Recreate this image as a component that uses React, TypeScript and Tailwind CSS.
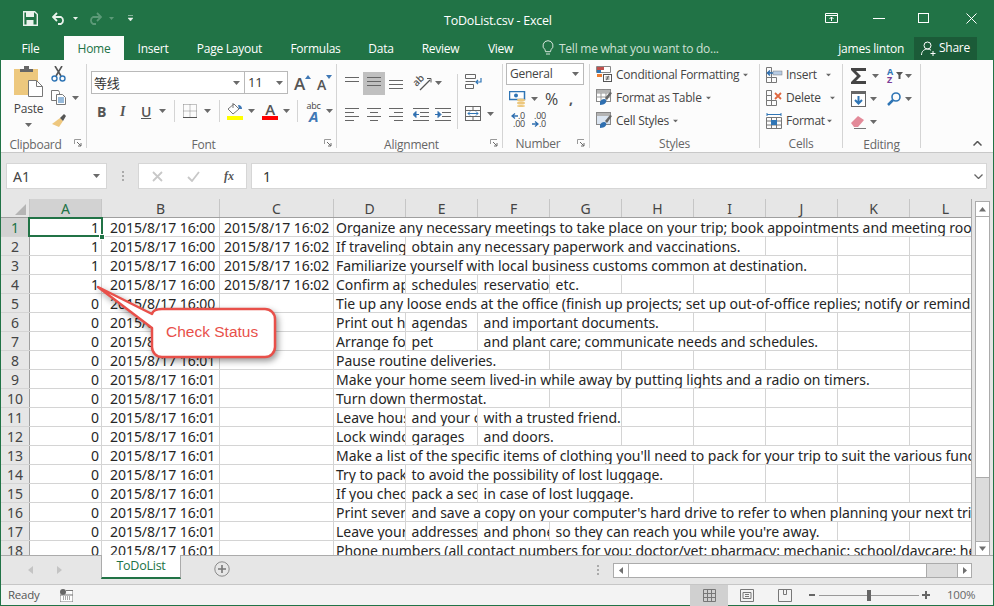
import type { ReactNode } from "react";

const colWidths = [72, 118, 114, 72, 72, 72, 72, 72, 72, 72, 72, 72];
const colNames = ["A", "B", "C", "D", "E", "F", "G", "H", "I", "J", "K", "L"];

type Cell = { t?: string; span?: number };
const B0 = "2015/8/17 16:00";
const B1 = "2015/8/17 16:01";
const C0 = "2015/8/17 16:02";

// D onwards: text plus how many columns it spills across
const rows: { a: string; b: string; c?: string; cells: Cell[] }[] = [
  { a: "1", b: B0, c: C0, cells: [{ t: "Organize any necessary meetings to take place on your trip; book appointments and meeting roo", span: 9 }] },
  { a: "1", b: B0, c: C0, cells: [{ t: "If traveling" }, { t: " obtain any necessary paperwork and vaccinations.", span: 5 }, {}, {}, {}] },
  { a: "1", b: B0, c: C0, cells: [{ t: "Familiarize yourself with local business customs common at destination.", span: 7 }, {}, {}] },
  { a: "1", b: B0, c: C0, cells: [{ t: "Confirm ap" }, { t: " schedules" }, { t: " reservatio" }, { t: " etc." }, {}, {}, {}, {}, {}] },
  { a: "0", b: B0, cells: [{ t: "Tie up any loose ends at the office (finish up projects; set up out-of-office replies; notify or remind", span: 9 }] },
  { a: "0", b: B0, cells: [{ t: "Print out ha" }, { t: " agendas" }, { t: " and important documents.", span: 3 }, {}, {}, {}, {}] },
  { a: "0", b: B0, cells: [{ t: "Arrange fo" }, { t: " pet" }, { t: " and plant care; communicate needs and schedules.", span: 5 }, {}, {}] },
  { a: "0", b: B1, cells: [{ t: "Pause routine deliveries.", span: 3 }, {}, {}, {}, {}, {}, {}] },
  { a: "0", b: B1, cells: [{ t: "Make your home seem lived-in while away by putting lights and a radio on timers.", span: 8 }, {}] },
  { a: "0", b: B1, cells: [{ t: "Turn down thermostat.", span: 3 }, {}, {}, {}, {}, {}, {}] },
  { a: "0", b: B1, cells: [{ t: "Leave hous" }, { t: " and your c" }, { t: " with a trusted friend.", span: 2 }, {}, {}, {}, {}, {}] },
  { a: "0", b: B1, cells: [{ t: "Lock windo" }, { t: " garages" }, { t: " and doors.", span: 2 }, {}, {}, {}, {}, {}] },
  { a: "0", b: B1, cells: [{ t: "Make a list of the specific items of clothing you'll need to pack for your trip to suit the various funct", span: 9 }] },
  { a: "0", b: B1, cells: [{ t: "Try to pack" }, { t: " to avoid the possibility of lost luggage.", span: 4 }, {}, {}, {}, {}] },
  { a: "0", b: B1, cells: [{ t: "If you chec" }, { t: " pack a sec" }, { t: " in case of lost luggage.", span: 3 }, {}, {}, {}, {}] },
  { a: "0", b: B1, cells: [{ t: "Print severa" }, { t: " and save a copy on your computer's hard drive to refer to when planning your next tri", span: 8 }] },
  { a: "0", b: B1, cells: [{ t: "Leave your" }, { t: " addresses" }, { t: " and phone" }, { t: " so they can reach you while you're away.", span: 4 }, {}, {}] },
  { a: "0", b: B1, cells: [{ t: "Phone numbers (all contact numbers for you: doctor/vet: pharmacy: mechanic: school/daycare: he", span: 9 }] },
];

function Caret({ className = "" }: { className?: string }) {
  return (
    <svg width="7" height="4" viewBox="0 0 7 4" className={"shrink-0 " + className}>
      <path d="M0 0h7L3.5 4z" fill="#6a6a6a" />
    </svg>
  );
}

function Launcher() {
  return (
    <svg width="8" height="8" viewBox="0 0 8 8" className="absolute right-[4px] bottom-[1px]">
      <path d="M.5 5V.5H7" fill="none" stroke="#9a9a9a" />
      <path d="M3 3l4 4M7 4v3H4" fill="none" stroke="#6a6a6a" />
    </svg>
  );
}

function Group({ label, width, children, launcher }: { label: string; width: number; children: ReactNode; launcher?: boolean }) {
  return (
    <div className="relative shrink-0 h-[84px] border-r border-[#d4d4d4]" style={{ width }}>
      <div className="h-[73px]">{children}</div>
      <div className={"text-center text-[12px] leading-[15px] text-[#666] " + (launcher ? "pr-[16px]" : "")}>{label}</div>
      {launcher && <Launcher />}
    </div>
  );
}

function Lines({ rows }: { rows: [number, number][] }) {
  return (
    <svg width="14" height="14" viewBox="0 0 14 14" className="shrink-0">
      {rows.map(([x, w], i) => (
        <rect key={i} x={x} y={1 + i * 4} width={w} height="1" fill="#666" />
      ))}
    </svg>
  );
}

function Scissors() {
  return (
    <svg width="15" height="16" viewBox="0 0 15 16">
      <path d="M4 0l6 10M11 0L5 10" stroke="#555" strokeWidth="1.6" />
      <circle cx="3.5" cy="12.5" r="2.5" fill="none" stroke="#2f75b5" strokeWidth="1.4" />
      <circle cx="11.5" cy="12.5" r="2.5" fill="none" stroke="#2f75b5" strokeWidth="1.4" />
    </svg>
  );
}

function CopyIcon() {
  return (
    <svg width="16" height="15" viewBox="0 0 16 15">
      <path d="M.5.5h7l1 2v8h-8z" fill="#fff" stroke="#777" />
      <path d="M5.5 4.5h6l3 3v7h-9z" fill="#fff" stroke="#777" />
      <path d="M7 8h6M7 10h6M7 12h6" stroke="#2f75b5" />
    </svg>
  );
}

function Painter() {
  return (
    <svg width="16" height="15" viewBox="0 0 16 15">
      <path d="M9 5l3 3-4 6-7-3z" fill="#eec77e" />
      <path d="M9 5l4-4 2 2-3 5z" fill="#555" />
    </svg>
  );
}

function PasteIcon() {
  return (
    <svg width="29" height="31" viewBox="0 0 29 31">
      <rect x="0" y="3" width="24" height="26" fill="#edc87e" />
      <path d="M6 6V3h4V0h5v3h4v3z" fill="#666" />
      <path d="M14.5 14.5h8l6 6v10h-14z" fill="#fff" stroke="#777" />
      <path d="M22.5 14.5v6h6" fill="none" stroke="#777" />
    </svg>
  );
}

function BigA({ grow }: { grow?: boolean }) {
  return (
    <span className="flex items-start w-[14px] h-[18px]">
      <span className={grow ? "text-[17px] leading-[22px] font-semibold text-[#555] mt-[-1px]" : "text-[14px] leading-[22px] font-semibold text-[#555]"}>A</span>
      <svg width="6" height="4" viewBox="0 0 6 4" className="mt-[1px] shrink-0">
        <path d={grow ? "M0 4h6L3 0z" : "M0 0h6L3 4z"} fill="#3f78b5" />
      </svg>
    </span>
  );
}

function VSep({ h = 22 }: { h?: number }) {
  return <div className="w-px shrink-0 bg-[#d4d4d4]" style={{ height: h }} />;
}

function Borders() {
  return (
    <svg width="14" height="14" viewBox="0 0 14 14">
      <path d="M.5.5h13v13M.5.5v13M7 .5v13M.5 7h13" stroke="#888" strokeDasharray="1 1" fill="none" />
      <path d="M0 13.5h14" stroke="#555" />
    </svg>
  );
}

function Fill() {
  return (
    <svg width="16" height="18" viewBox="0 0 16 18">
      <path d="M1 7l6-5 5 5-6 5z" fill="#fff" stroke="#777" />
      <path d="M6 1v5" stroke="#777" />
      <path d="M11 3c3 0 4 2 4 4l-3 0z" fill="#3f78b5" />
      <rect x="0" y="14" width="16" height="4" fill="#ffff00" />
    </svg>
  );
}

function Orientation() {
  return (
    <div className="relative w-[19px] h-[16px]">
      <span className="absolute left-[-1px] top-[-1px] text-[10px] leading-[12px] font-semibold text-[#555] -rotate-45">ab</span>
      <svg width="19" height="16" viewBox="0 0 19 16" className="absolute left-0 top-0">
        <path d="M7 15L17 5" stroke="#555" strokeWidth="1.2" />
        <path d="M14 3.500h4v4" fill="none" stroke="#555" />
      </svg>
    </div>
  );
}

function Indent({ flip }: { flip?: boolean }) {
  return (
    <svg width="16" height="13" viewBox="0 0 16 13">
      <path d="M0 .5h16M7 4.5h9M7 8.5h9M0 12.5h16" stroke="#666" />
      <path d={flip ? "M0 6.5h3M3 3.5l3 3-3 3z" : "M6 6.5H3M3 3.5l-3 3 3 3z"} stroke="#2f6fb0" fill="#2f6fb0" />
    </svg>
  );
}

function WrapIcon() {
  return (
    <svg width="17" height="16" viewBox="0 0 17 16">
      <path d="M.5.5h10v4H.5zM.5 10.5h8v4h-8z" fill="none" stroke="#666" />
      <path d="M.5 7.5h10" stroke="#666" />
      <path d="M16 4v4h-5M13 6l-2 2 2 2" fill="none" stroke="#2f75b5" strokeWidth="1.2" />
    </svg>
  );
}

function MergeIcon() {
  return (
    <svg width="16" height="15" viewBox="0 0 16 15">
      <rect x=".5" y=".5" width="15" height="14" fill="none" stroke="#666" />
      <path d="M.5 4.5h15M.5 10.5h15M8 .5v4M8 10.5v4" stroke="#666" />
      <path d="M3 7.5h10" stroke="#2f75b5" />
      <path d="M5 5.5l-2 2 2 2M11 5.5l2 2-2 2" fill="none" stroke="#2f75b5" />
    </svg>
  );
}

function Currency() {
  return (
    <svg width="17" height="16" viewBox="0 0 17 16">
      <rect x=".5" y=".5" width="15" height="8" fill="#fff" stroke="#2f75b5" strokeWidth="1.5" />
      <circle cx="7" cy="4.5" r="2" fill="#2f75b5" />
      <ellipse cx="12" cy="9" rx="4" ry="1.5" fill="#edc87e" />
      <ellipse cx="12" cy="12" rx="4" ry="1.5" fill="#edc87e" />
      <ellipse cx="12" cy="15" rx="4" ry="1" fill="#edc87e" />
    </svg>
  );
}

function DecArrow({ right }: { right?: boolean }) {
  return (
    <svg width="7" height="6" viewBox="0 0 7 6" className="shrink-0">
      {right ? <path d="M0 3h5M3 .5L6 3 3 5.5" fill="none" stroke="#2f6fb0" strokeWidth="1.3" /> : <path d="M7 3H2M4 .5L1 3l3 2.5" fill="none" stroke="#2f6fb0" strokeWidth="1.3" />}
    </svg>
  );
}

function TableIcon({ kind }: { kind: "cond" | "table" | "style" }) {
  return (
    <svg width="17" height="17" viewBox="0 0 17 17" className="shrink-0">
      {kind === "cond" ? (
        <>
          <path d="M.5.5h14v6h-14z" fill="#fff" stroke="#888" />
          <rect x="1" y="1" width="7" height="3" fill="#c0504d" />
          <rect x="1" y="4" width="4" height="3" fill="#2f75b5" />
          <rect x="1" y="8" width="5" height="3" fill="#ed7d31" />
          <rect x="7.5" y="8.5" width="8" height="7" fill="#fff" stroke="#555" />
          <path d="M9.5 11h4M9.5 13h4M12.5 9.8l-2 4.4" stroke="#444" strokeWidth=".8" />
        </>
      ) : (
        <>
          <rect x=".5" y=".5" width="14" height="12" fill={kind === "table" ? "#fff" : "#dbe5f1"} stroke="#888" />
          <path d={kind === "table" ? "M.5 4h14M.5 8h14M5 .5v12M10 .5v12" : "M.5 3h14"} stroke="#999" />
          <rect x="1" y="1" width="13" height="3" fill="#b4b4b4" />
          <path d="M9 9l5-6 2 1-5 7z" fill="#666" />
          <path d="M4 13c1-3 5-4 6-2s-1 5-6 5z" fill="#2f6fb0" />
        </>
      )}
    </svg>
  );
}

function StyleRow({ kind, label }: { kind: "cond" | "table" | "style"; label: string }) {
  return (
    <div className="flex items-center h-[23px] pl-[6px]">
      <TableIcon kind={kind} />
      <span className="ml-[3px] text-[12px] text-[#444] whitespace-nowrap">{label}</span>
      <Caret className="ml-[3px] scale-75" />
    </div>
  );
}

function CellIcon({ kind }: { kind: "ins" | "del" | "fmt" }) {
  return (
    <svg width="17" height="16" viewBox="0 0 17 16" className="shrink-0">
      {kind === "fmt" ? (
        <>
          <path d="M.5 4.5h15v11H.5zM.5 8h15M.5 12h15M5.5 4.5v11M10.5 4.5v11" fill="none" stroke="#777" />
          <rect x="5" y="7" width="6" height="5" fill="#2f75b5" />
          <path d="M1 1.5h14M1 0v3M15 0v3" stroke="#2f75b5" />
        </>
      ) : (
        <>
          <path d="M.5.5h5v5h-5zM.5 10.5h5v5h-5zM5.5 10.5h5v5h-5zM.5 5.5h5v5h-5z" fill="none" stroke="#777" />
          {kind === "ins" ? (
            <>
              <rect x="7" y="4" width="9" height="4" fill="#b8cce4" stroke="#777" strokeWidth=".5" />
              <path d="M7 6H2M4 3.5L1.5 6 4 8.5" fill="none" stroke="#2f6fb0" strokeWidth="1.5" />
            </>
          ) : (
            <path d="M9 3l6 6M15 3l-6 6" stroke="#e0673f" strokeWidth="1.8" />
          )}
        </>
      )}
    </svg>
  );
}

function CellRow({ kind, label, caretGap }: { kind: "ins" | "del" | "fmt"; label: string; caretGap: number }) {
  return (
    <div className="flex items-center h-[23px] pl-[6px]">
      <CellIcon kind={kind} />
      <span className="ml-[3px] text-[12px] text-[#444] whitespace-nowrap">{label}</span>
      <span style={{ width: caretGap }} />
      <Caret className="scale-75" />
    </div>
  );
}

function Ribbon() {
  return (
    <div className="flex h-[93px] pt-[4px] bg-[#fcfcfc] border-b border-[#c8c8c8] relative">
      <Group label="Clipboard" width={86} launcher>
        <div className="flex pl-[13px] pt-[2px]">
          <div className="flex flex-col items-center w-[29px]">
            <PasteIcon />
            <span className="text-[12px] leading-[16px] mt-[4px] text-[#444]">Paste</span>
            <Caret className="mt-[6px]" />
          </div>
          <div className="flex flex-col gap-[8px] ml-[8px]">
            <Scissors />
            <div className="flex items-center gap-[5px]">
              <CopyIcon />
              <Caret />
            </div>
            <Painter />
          </div>
        </div>
      </Group>

      <Group label="Font" width={250} launcher>
        <div className="flex pl-[4px] pt-[7px] items-center">
          <div className="flex items-center justify-between w-[154px] h-[23px] border border-[#b9b9b9] bg-white pl-[2px] pr-[4px]">
            <span className="text-[13px] text-[#333]" style={{ fontFamily: '"Noto Sans CJK SC", sans-serif' }}>等线</span>
            <Caret />
          </div>
          <div className="flex items-center justify-between w-[43px] h-[23px] border border-l-0 border-[#b9b9b9] bg-white pl-[3px] pr-[4px]">
            <span className="text-[13px] text-[#333]">11</span>
            <Caret />
          </div>
          <div className="ml-[6px]"><BigA grow /></div>
          <div className="ml-[9px]"><BigA /></div>
        </div>
        <div className="flex items-center pt-[5px] pl-[10px] h-[29px]">
          <span className="w-[8px] text-[14px] font-bold text-[#555]">B</span>
          <span className="ml-[15px] w-[8px] text-[14px] italic font-semibold text-[#555]" style={{ fontFamily: '"Liberation Serif", serif' }}>I</span>
          <span className="ml-[13px] w-[10px] text-[14px] font-semibold underline text-[#555]">U</span>
          <Caret className="ml-[8px]" />
          <div className="ml-[8px]"><VSep /></div>
          <div className="ml-[8px] flex"><Borders /></div>
          <Caret className="ml-[7px]" />
          <div className="ml-[8px]"><VSep /></div>
          <div className="ml-[7px] flex"><Fill /></div>
          <Caret className="ml-[5px]" />
          <div className="ml-[7px] relative w-[16px] h-[18px] flex flex-col items-center">
            <span className="text-[15px] leading-[14px] font-semibold text-[#555]">A</span>
            <span className="absolute bottom-0 w-[16px] h-[4px] bg-[#ff0000]" />
          </div>
          <Caret className="ml-[5px]" />
          <div className="ml-[7px]"><VSep /></div>
          <div className="ml-[8px] relative w-[15px] h-[18px] flex flex-col items-center">
            <span className="text-[9px] leading-[8px] text-[#444]">abc</span>
            <span className="text-[15px] leading-[12px] font-bold italic text-[#3f78b5]">A</span>
          </div>
          <Caret className="ml-[5px]" />
        </div>
      </Group>

      <Group label="Alignment" width={166} launcher>
        <div className="flex">
          <div className="flex flex-col pl-[8px] pt-[7px]">
            <div className="flex items-center h-[24px]">
              <Lines rows={[[0, 14], [0, 14]]} />
              <div className="ml-[4px] w-[22px] h-[23px] bg-[#c0c0c0] flex items-center justify-center"><Lines rows={[[0, 14], [0, 14], [0, 14]]} /></div>
              <div className="ml-[4px] mt-[6px] flex"><Lines rows={[[0, 14], [0, 14], [0, 14]]} /></div>
              <div className="ml-[10px] flex"><Orientation /></div>
              <Caret className="ml-[3px]" />
            </div>
            <div className="flex items-center h-[24px] mt-[7px]">
              <Lines rows={[[0, 14], [0, 9], [0, 14], [0, 9]]} />
              <div className="ml-[8px] flex"><Lines rows={[[0, 14], [3, 8], [0, 14], [3, 8]]} /></div>
              <div className="ml-[8px] flex"><Lines rows={[[0, 14], [5, 9], [0, 14], [5, 9]]} /></div>
              <div className="ml-[10px] flex"><Indent /></div>
              <div className="ml-[6px] flex"><Indent flip /></div>
            </div>
          </div>
          <div className="ml-[6px] mt-[10px]"><VSep h={55} /></div>
          <div className="flex flex-col ml-[7px] pt-[10px] gap-[16px]">
            <WrapIcon />
            <div className="flex items-center gap-[6px]"><MergeIcon /><Caret /></div>
          </div>
        </div>
      </Group>

      <Group label="Number" width={87} launcher>
        <div className="flex items-center justify-between w-[78px] h-[22px] ml-[3px] mt-[-1px] border border-[#b9b9b9] bg-white pl-[3px] pr-[4px]">
          <span className="text-[12px] text-[#444]">General</span>
          <Caret />
        </div>
        <div className="flex items-center pl-[6px] mt-[2px] h-[24px]">
          <Currency />
          <Caret className="ml-[5px]" />
          <span className="ml-[7px] text-[16px] text-[#444] leading-none">%</span>
          <span className="ml-[11px] text-[14px] font-bold text-[#555] leading-none">,</span>
        </div>
        <div className="flex items-center pl-[6px] mt-[-2px] h-[22px] text-[9px] leading-[8px] text-[#444]">
          <div className="flex flex-col items-end w-[16px]">
            <span className="flex items-center"><DecArrow />.0</span>
            <span>.00</span>
          </div>
          <div className="flex flex-col items-end w-[15px] ml-[6px]">
            <span>.00</span>
            <span className="flex items-center"><DecArrow right />.0</span>
          </div>
        </div>
      </Group>

      <Group label="Styles" width={170}>
        <div className="mt-[-1px]">
          <StyleRow kind="cond" label="Conditional Formatting" />
          <StyleRow kind="table" label="Format as Table" />
          <StyleRow kind="style" label="Cell Styles" />
        </div>
      </Group>

      <Group label="Cells" width={83}>
        <div className="mt-[-1px]">
          <CellRow kind="ins" label="Insert" caretGap={8} />
          <CellRow kind="del" label="Delete" caretGap={8} />
          <CellRow kind="fmt" label="Format" caretGap={1} />
        </div>
      </Group>

      <Group label="Editing" width={78}>
        <div className="pl-[8px]">
          <div className="flex items-center h-[23px]">
            <svg width="15" height="16" viewBox="0 0 15 16"><path d="M0 0h15v3H5l5 5-5 5h10v3H0v-2l6-6-6-6z" fill="#444" /></svg>
            <Caret className="ml-[6px]" />
            <span className="ml-[8px] w-[9px] text-[9px] leading-[8px] font-bold flex flex-col"><span className="text-[#2f75b5]">A</span><span className="text-[#7b3f98]">Z</span></span>
            <svg width="7" height="7" viewBox="0 0 7 7"><path d="M0 0h7L4.5 3v4h-2V3z" fill="#555" /></svg>
            <Caret className="ml-[2px]" />
          </div>
          <div className="flex items-center h-[23px]">
            <svg width="15" height="16" viewBox="0 0 15 16"><rect x=".5" y=".5" width="14" height="15" fill="#fff" stroke="#666" /><rect x="0" y="0" width="15" height="3" fill="#666" /><path d="M7.5 5v7M4 9l3.5 3.5L11 9" fill="none" stroke="#2f75b5" strokeWidth="2" /></svg>
            <Caret className="ml-[4px]" />
            <svg width="14" height="14" viewBox="0 0 14 14" className="ml-[10px]"><circle cx="9" cy="5" r="4" fill="none" stroke="#2f75b5" strokeWidth="1.6" /><path d="M6 8l-5 5" stroke="#2f75b5" strokeWidth="2.5" /></svg>
            <Caret className="ml-[4px]" />
          </div>
          <div className="flex items-center h-[23px]">
            <svg width="15" height="14" viewBox="0 0 15 14"><path d="M0 8l7-7 6 4-6 7H3z" fill="#e38a99" /><path d="M3 13.5h12" stroke="#777" /></svg>
            <Caret className="ml-[4px]" />
          </div>
        </div>
      </Group>

      <svg width="9" height="5" viewBox="0 0 9 5" className="absolute right-[11px] bottom-[6px]"><path d="M.5 4.5l4-4 4 4" fill="none" stroke="#555" strokeWidth="1.5" /></svg>
    </div>
  );
}

function TitleBar() {
  return (
    <div className="relative flex items-center h-[36px] text-white">
      <svg width="15" height="15" viewBox="0 0 15 15" className="ml-[22px]">
        <path d="M.7.7h11l2.6 2.6v11H.7z" fill="none" stroke="#eaf2ec" strokeWidth="1.4" />
        <rect x="3" y="1" width="8" height="5" fill="#eaf2ec" />
        <rect x="3.5" y="9" width="7" height="5" fill="#eaf2ec" />
      </svg>
      <svg width="14" height="13" viewBox="0 0 14 13" className="ml-[14px]">
        <path d="M1 5h8a4 4 0 0 1 0 7H6" fill="none" stroke="#eaf2ec" strokeWidth="1.8" />
        <path d="M5 1L1 5l4 4" fill="none" stroke="#eaf2ec" strokeWidth="1.8" />
      </svg>
      <svg width="5" height="3" viewBox="0 0 5 3" className="ml-[7px]"><path d="M0 0h5L2.5 3z" fill="#eaf2ec" /></svg>
      <svg width="14" height="13" viewBox="0 0 14 13" className="ml-[10px]">
        <path d="M13 5H5a4 4 0 0 0 0 7h3" fill="none" stroke="#5c9a78" strokeWidth="1.8" />
        <path d="M9 1l4 4-4 4" fill="none" stroke="#5c9a78" strokeWidth="1.8" />
      </svg>
      <svg width="5" height="3" viewBox="0 0 5 3" className="ml-[7px]"><path d="M0 0h5L2.5 3z" fill="#5c9a78" /></svg>
      <svg width="5" height="6" viewBox="0 0 5 6" className="ml-[14px]"><path d="M0 .5h5M0 3h5L2.5 6z" fill="#eaf2ec" stroke="#eaf2ec" strokeWidth=".5" /></svg>
      <span className="absolute left-[443px] top-[12px] text-[12.5px] leading-[18px] whitespace-nowrap">ToDoList.csv - Excel</span>
      <div className="ml-auto flex items-center">
        <svg width="13" height="10" viewBox="0 0 13 10"><path d="M.5.5h12v9H.5zM.5 2.5h12M6.5 8V4M4.5 6l2-2 2 2" fill="none" stroke="#fff" /></svg>
        <div className="ml-[35px] w-[12px] h-px bg-white" />
        <div className="ml-[33px] w-[11px] h-[10px] border border-white" />
        <svg width="11" height="11" viewBox="0 0 11 11" className="ml-[37px] mr-[16px]"><path d="M.5.5l10 10M10.5.5l-10 10" stroke="#fff" /></svg>
      </div>
    </div>
  );
}

function Tab({ label, width, active }: { label: string; width: number; active?: boolean }) {
  return (
    <div
      className={"flex items-center justify-center shrink-0 h-[24px] pt-px " + (active ? "bg-[#fcfcfc] text-[#217346]" : "text-white")}
      style={{ width }}
    >
      {label}
    </div>
  );
}

function TabBar() {
  return (
    <div className="flex items-center h-[24px] text-[12px]">
      <Tab label="File" width={59} />
      <div className="ml-[4px]"><Tab label="Home" width={60} active /></div>
      <Tab label="Insert" width={58} />
      <Tab label="Page Layout" width={95} />
      <Tab label="Formulas" width={77} />
      <Tab label="Data" width={54} />
      <Tab label="Review" width={65} />
      <Tab label="View" width={55} />
      <svg width="12" height="16" viewBox="0 0 12 16" className="ml-[14px]">
        <path d="M6 .7a5 5 0 0 1 3 9l-.5 2h-5L3 9.7A5 5 0 0 1 6 .7zM4 14h4" fill="none" stroke="#d7e6dc" />
      </svg>
      <span className="ml-[5px] pt-px text-[#cfe0d5] whitespace-nowrap">Tell me what you want to do...</span>
      <span className="ml-auto pt-px text-white whitespace-nowrap">james linton</span>
      <div className="flex items-center justify-center ml-[10px] mr-[16px] w-[63px] h-[23px] bg-[#1b5b38] text-white">
        <svg width="15" height="15" viewBox="0 0 15 15" className="mr-[3px]">
          <circle cx="6.5" cy="4.5" r="3.5" fill="none" stroke="#fff" />
          <path d="M.5 14c0-4 3-6 6-6 1.5 0 2.5.5 3.5 1.2M9.5 12.5h5M12 10v5" fill="none" stroke="#fff" />
        </svg>
        Share
      </div>
    </div>
  );
}

function FormulaBar() {
  return (
    <div className="flex items-center h-[46px] py-[10px] bg-[#e6e6e6] pl-[5px] pr-[6px] tracking-normal" style={{ fontFamily: '"Noto Sans", sans-serif' }}>
      <div className="flex items-center justify-between w-[101px] h-[26px] bg-white border border-[#d6d6d6] pl-[6px] pr-[6px] text-[14px] text-[#444]">
        A1
        <Caret />
      </div>
      <div className="w-[31px] flex flex-col items-center gap-[2px]">
        <span className="w-[2px] h-[2px] bg-[#aaa]" />
        <span className="w-[2px] h-[2px] bg-[#aaa]" />
        <span className="w-[2px] h-[2px] bg-[#aaa]" />
      </div>
      <div className="flex items-center w-[109px] h-[26px] bg-white border border-[#d6d6d6] shrink-0">
        <svg width="11" height="11" viewBox="0 0 11 11" className="ml-[13px]"><path d="M1 1l9 9M10 1l-9 9" stroke="#c8c8c8" strokeWidth="1.8" /></svg>
        <svg width="13" height="11" viewBox="0 0 13 11" className="ml-[24px]"><path d="M1 6l4 4 7-9" fill="none" stroke="#c8c8c8" strokeWidth="1.8" /></svg>
        <span className="ml-[24px] text-[12px] italic font-semibold text-[#555]" style={{ fontFamily: '"Liberation Serif", serif' }}>fx</span>
      </div>
      <div className="flex items-center justify-between flex-1 h-[26px] ml-[4px] bg-white border border-[#d6d6d6] pl-[11px] pr-[3px] text-[14px] text-[#333]">
        1
        <svg width="9" height="5" viewBox="0 0 9 5"><path d="M.5.5l4 4 4-4" fill="none" stroke="#666" strokeWidth="1.3" /></svg>
      </div>
    </div>
  );
}

function HeaderRow() {
  return (
    <div className="flex h-[19px] bg-[#e6e6e6] border-b border-[#9f9f9f]">
      <div className="relative w-[29px] shrink-0 border-r border-[#c6c6c6]">
        <svg width="11" height="11" viewBox="0 0 11 11" className="absolute right-[3px] bottom-[2px]"><path d="M11 0v11H0z" fill="#b5b5b5" /></svg>
      </div>
      {colNames.map((c, i) => (
        <div
          key={c}
          style={{ width: colWidths[i] }}
          className={"shrink-0 flex items-center justify-center border-r border-[#c6c6c6] " + (i === 0 ? "bg-[#d2d2d2] text-[#217346]" : "text-[#444]")}
        >
          {c}
        </div>
      ))}
    </div>
  );
}

function GridCell({ width, children, right }: { width: number; children?: ReactNode; right?: boolean }) {
  return (
    <div
      style={{ width }}
      className={"shrink-0 overflow-hidden whitespace-pre pl-[2px] pr-[2px] border-r border-[#d4d4d4] " + (right ? "text-right" : "")}
    >
      {children}
    </div>
  );
}

function SheetRow({ row, index }: { row: (typeof rows)[number]; index: number }) {
  let col = 3;
  return (
    <div className="flex h-[19px] shrink-0 border-b border-[#d4d4d4] leading-[19px]">
      <div className={"w-[29px] shrink-0 text-center border-r border-[#9f9f9f] " + (index === 0 ? "bg-[#d2d2d2] text-[#217346]" : "bg-[#e6e6e6] text-[#444]")}>
        {index + 1}
      </div>
      <GridCell width={colWidths[0]} right>{row.a}</GridCell>
      <GridCell width={colWidths[1]}><span className="pl-[6px]">{row.b}</span></GridCell>
      <GridCell width={colWidths[2]}><span className="pl-[2px]">{row.c ?? ""}</span></GridCell>
      {row.cells.map((cell, i) => {
        const span = cell.span ?? 1;
        const w = colWidths.slice(col, col + span).reduce((a, b) => a + b, 0);
        col += span;
        return <GridCell key={i} width={w}>{cell.t}</GridCell>;
      })}
    </div>
  );
}

function ScrollArrow({ d }: { d: string }) {
  return (
    <svg width="7" height="7" viewBox="0 0 7 7"><path d={d} fill="#6f6f6f" /></svg>
  );
}

function VScroll() {
  return (
    <div className="w-[21px] shrink-0 bg-[#e6e6e6] pl-[3px] pr-[3px] pt-[2px]">
      <div className="flex flex-col h-[354px] bg-[#dcdcdc] border-x border-[#ababab]">
        <div className="h-[16px] flex items-center justify-center bg-white border-y border-[#ababab]"><ScrollArrow d="M0 5.5L3.5 1 7 5.5z" /></div>
        <div className="h-[261px] bg-white border-b border-[#ababab]" />
        <div className="flex-1" />
        <div className="h-[14px] flex items-center justify-center bg-white border-t border-[#ababab]"><ScrollArrow d="M0 1.5L3.5 6 7 1.5z" /></div>
      </div>
    </div>
  );
}

function Sheet() {
  return (
    <div className="relative flex h-[356px] overflow-hidden tracking-normal" style={{ fontFamily: '"Noto Sans", sans-serif' }}>
      <div className="w-[971px] shrink-0 overflow-hidden bg-white text-[14px] tracking-[-0.04px] text-[#262626] border-r border-[#ababab]">
        <HeaderRow />
        {rows.map((r, i) => (
          <SheetRow key={i} row={r} index={i} />
        ))}
      </div>
      <VScroll />
      {/* selected cell A1 */}
      <div className="absolute left-[27px] top-[18px] w-[75px] h-[20px] border-2 border-[#217346]" />
      <div className="absolute left-[98px] top-[35px] w-[6px] h-[6px] bg-[#217346] border border-white" />
    </div>
  );
}

function Callout() {
  return (
    <div className="absolute left-[90px] top-[280px] w-[195px] h-[85px]">
      <svg width="195" height="85" viewBox="0 0 195 85" className="drop-shadow-[2px_3px_3px_rgba(0,0,0,0.4)]">
        <path
          d="M72 29 H175 a10 10 0 0 1 10 10 V67 a10 10 0 0 1 -10 10 H72 a10 10 0 0 1 -10 -10 V48 L8 7 L62 34 Q63 29 72 29 z"
          fill="#fff"
          stroke="#e8504a"
          strokeWidth="2.5"
          strokeLinejoin="round"
        />
      </svg>
      <span className="absolute left-[76px] top-[42px] text-[15.5px] leading-[20px] tracking-normal text-[#e8504a] whitespace-nowrap" style={{ fontFamily: '"Liberation Sans", sans-serif' }}>
        Check Status
      </span>
    </div>
  );
}

function SheetTabs() {
  return (
    <div className="flex h-[29px] bg-[#e6e6e6] border-t border-[#ababab]">
      <div className="flex items-center w-[100px] pl-[27px] gap-[24px]">
        <svg width="5" height="8" viewBox="0 0 5 8"><path d="M5 0v8L0 4z" fill="#c4c4c4" /></svg>
        <svg width="5" height="8" viewBox="0 0 5 8"><path d="M0 0v8l5-4z" fill="#c4c4c4" /></svg>
      </div>
      <div className="w-[80px] h-[24px] mt-[-1px] bg-white border-x border-[#ababab] border-b-2 border-b-[#217346] flex items-center justify-center text-[12.5px] text-[#217346]">
        ToDoList
      </div>
      <svg width="16" height="16" viewBox="0 0 16 16" className="ml-[33px] mt-[5px]">
        <circle cx="8" cy="8" r="7.2" fill="none" stroke="#8a8a8a" />
        <path d="M8 4v8M4 8h8" stroke="#777" strokeWidth="1.6" />
      </svg>
      <div className="ml-auto flex items-center">
        <div className="flex flex-col gap-[2px] mr-[14px]">
          <span className="w-[2px] h-[2px] bg-[#aaa]" />
          <span className="w-[2px] h-[2px] bg-[#aaa]" />
          <span className="w-[2px] h-[2px] bg-[#aaa]" />
        </div>
        <div className="flex w-[359px] h-[15px] border border-[#ababab] bg-[#dcdcdc]">
          <div className="w-[14px] flex items-center justify-center bg-white"><ScrollArrow d="M5 0v7L1 3.5z" /></div>
          <div className="w-[299px] bg-white border-x border-[#ababab]" />
          <div className="ml-auto w-[14px] flex items-center justify-center bg-white border-l border-[#ababab]"><ScrollArrow d="M2 0v7l4-3.5z" /></div>
        </div>
        <div className="w-[21px]" />
      </div>
    </div>
  );
}

function StatusBar() {
  return (
    <div className="flex items-center h-[21px] bg-[#f3f3f3] border-t border-[#c6c6c6] text-[11.5px] text-[#555]">
      <span className="ml-[7px]">Ready</span>
      <svg width="13" height="13" viewBox="0 0 13 13" className="ml-[20px]">
        <circle cx="3" cy="3" r="3" fill="#666" />
        <path d="M6 1.5h7V13H0V6h13" fill="#fff" stroke="#777" />
        <path d="M3 8h8M3 10h8" stroke="#555" strokeDasharray="1 1" />
      </svg>
      <div className="ml-auto flex items-center w-[38px] h-[21px] justify-center bg-[#d0d0d0]">
        <svg width="13" height="13" viewBox="0 0 13 13"><path d="M.5.5h12v12H.5zM.5 4.5h12M.5 8.5h12M4.5.5v12M8.5.5v12" fill="none" stroke="#777" /></svg>
      </div>
      <svg width="14" height="13" viewBox="0 0 14 13" className="ml-[12px]"><path d="M.5.5h13v12H.5z" fill="none" stroke="#777" /><path d="M3 3.5h8v6H3zM5 5.5h4M5 7.5h4" fill="none" stroke="#777" /></svg>
      <svg width="14" height="13" viewBox="0 0 14 13" className="ml-[24px]"><path d="M.5.5h13v12H.5zM5.5.5v5h3v-5" fill="none" stroke="#777" /></svg>
      <div className="ml-[17px] w-[6px] h-[2px] bg-[#666]" />
      <div className="relative ml-[4px] w-[100px] h-px bg-[#999]">
        <div className="absolute left-[48px] top-[-5px] w-[4px] h-[11px] bg-[#666]" />
      </div>
      <svg width="8" height="8" viewBox="0 0 8 8" className="ml-[3px]"><path d="M4 0v8M0 4h8" stroke="#666" strokeWidth="2" /></svg>
      <span className="ml-[17px] mr-[19px] w-[27px] text-[#666] whitespace-nowrap">100%</span>
    </div>
  );
}

export default function App() {
  return (
    <div
      className="relative w-[994px] h-[606px] overflow-hidden bg-[#217346] px-[1px] pb-[1px] tracking-[-0.25px]"
      style={{ fontFamily: '"Open Sans", "Noto Sans", sans-serif' }}
    >
      <TitleBar />
      <TabBar />
      <div className="bg-[#e6e6e6]">
        <Ribbon />
        <FormulaBar />
        <Sheet />
        <SheetTabs />
        <StatusBar />
      </div>
      <Callout />
    </div>
  );
}
